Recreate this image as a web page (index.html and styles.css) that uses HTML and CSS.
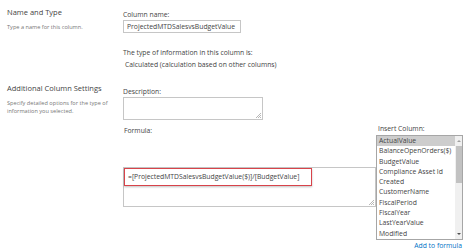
FILE: index.html
```html
<!DOCTYPE html>
<html lang="en">
<head>
    <meta charset="UTF-8">
    <title>Column settings</title>
    <link rel="stylesheet" href="styles.css">
</head>
<body>
    <div class="section name_type">
        <div class="side">
            <h3>Name and Type</h3>
            <p>Type a name for this column.</p>
        </div>
        <div class="main">
            <div class="label">Column name:</div>
            <div class="input">ProjectedMTDSalesvsBudgetValue</div>
            <div class="label type_label">The type of information in this column is:</div>
            <div class="type_value">Calculated (calculation based on other columns)</div>
        </div>
    </div>
    <div class="section settings">
        <div class="side">
            <h3>Additional Column Settings</h3>
            <p>Specify detailed options for the type of information you selected.</p>
        </div>
        <div class="main">
            <div class="label">Description:</div>
            <div class="textbox desc">
                <svg class="grip" width="6" height="6" viewBox="0 0 6 6"><path d="M6 1L1 6M6 3L3 6M6 5L5 6" stroke="#999" stroke-width="0.7"/></svg>
            </div>
            <div class="formula_row">
                <div class="formula_col">
                    <div class="label formula_label">Formula:</div>
                    <div class="textbox formula">
                        <div class="formula_text">=[ProjectedMTDSalesvsBudgetValue($)]/[BudgetValue]</div>
                        <svg class="grip" width="6" height="6" viewBox="0 0 6 6"><path d="M6 1L1 6M6 3L3 6M6 5L5 6" stroke="#999" stroke-width="0.7"/></svg>
                    </div>
                </div>
                <div class="insert_col">
                    <div class="label">Insert Column:</div>
                    <div class="listbox">
                        <ul>
                            <li class="active">ActualValue</li>
                            <li>BalanceOpenOrders($)</li>
                            <li>BudgetValue</li>
                            <li>Compliance Asset Id</li>
                            <li>Created</li>
                            <li>CustomerName</li>
                            <li>FiscalPeriod</li>
                            <li>FiscalYear</li>
                            <li>LastYearValue</li>
                            <li>Modified</li>
                        </ul>
                        <div class="scroll">
                            <span class="arrow up"></span>
                            <span class="thumb"></span>
                            <span class="arrow down"></span>
                        </div>
                    </div>
                    <a class="add_link" href="#">Add to formula</a>
                </div>
            </div>
        </div>
    </div>
</body>
</html>
```
FILE: styles.css
```css
* { margin: 0; padding: 0; box-sizing: border-box;}
body { background: #ffffff; font-family: "Open Sans", "Noto Sans", sans-serif; color: #444444; width: 474px; height: 252px; overflow: hidden;}
.section { display: flex;}
.side { width: 123px; padding-left: 7px; flex: none;}
.side h3 { font-size: 7.5px; font-weight: normal; color: #444444; line-height: 10px;}
.side p { font-size: 5.6px; color: #777777; line-height: 8px; width: 108px;}
.main { flex: 1; }
.label { font-size: 6.8px; line-height: 10px; color: #444444;}

.name_type { padding-top: 7px; height: 80px;}
.name_type .side h3 { margin-bottom: 6px;}
.name_type .main { padding-top: 3px;}
.input { width: 118px; height: 13px; border: 1px solid #c6c6c6; font-size: 6.8px; line-height: 11px; padding-left: 3px; color: #444444; white-space: nowrap; overflow: hidden;}
.type_label { margin-top: 15px;}
.type_value { font-size: 6.8px; line-height: 10px; margin-top: 2px; padding-left: 2px;}

.settings .side h3 { margin-bottom: 6px; margin-top: 3px;}
.settings .main { padding-top: 7px;}
.textbox { border: 1px solid #c6c6c6; position: relative; background: #ffffff;}
.grip { position: absolute; right: 1px; bottom: 1px;}
.desc { width: 140px; height: 23px;}

.formula_row { display: flex; margin-top: 4px;}
.formula_col { width: 253px; flex: none;}
.formula_label { margin-top: 2px; padding-left: 1px;}
.formula { width: 253px; height: 40px; margin-top: 31px;}
.formula_text { width: 188px; height: 18px; border: 1.5px solid #d8434a; box-shadow: 0 1px 2px rgba(0,0,0,0.25); font-size: 6.8px; line-height: 15px; padding-left: 3px; white-space: nowrap; color: #444444;}

.insert_col { padding-left: 0px; width: 90px;}
.insert_col .label { padding-left: 2px;}
.listbox { width: 87px; height: 105px; border: 1px solid #a6a6a6; display: flex; margin-top: 1px;}
.listbox ul { list-style: none; flex: 1;}
.listbox li { font-size: 6.8px; line-height: 10.3px; height: 10.3px; padding-left: 2px; color: #444444; white-space: nowrap;}
.listbox li.active { background-color: #cdcdcd;}
.scroll { width: 7px; background: #f0f0f0; display: flex; flex-direction: column; align-items: center;}
.arrow { width: 0; height: 0; border-left: 2px solid transparent; border-right: 2px solid transparent; margin: 4px 0;}
.arrow.up { border-bottom: 2px solid #a0a0a0;}
.arrow.down { border-top: 2px solid #505050; margin-top: auto;}
.thumb { width: 6px; height: 37px; background: #c2c2c2;}
.add_link { display: block; text-align: right; font-size: 6.8px; line-height: 10px; color: #0072c6; text-decoration: none; margin-top: 1px; padding-right: 2px; width: 88px;}
```
